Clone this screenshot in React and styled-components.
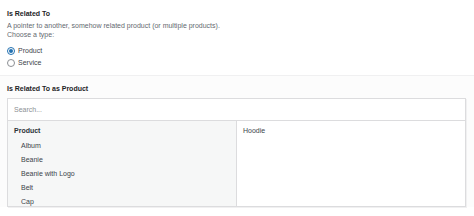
import React from "react";
import styled, { createGlobalStyle } from "styled-components";

const GlobalStyle = createGlobalStyle`
  html, body {
    margin: 0;
    padding: 0;
    background: #ffffff;
  }
  body {
    font-family: "Liberation Sans", Arial, sans-serif;
    color: #3c434a;
  }
`;

const Page = styled.div`
  width: 474px;
  height: 216px;
  overflow: hidden;
  display: flex;
  flex-direction: column;
`;

const Section = styled.div`
  display: flex;
  flex-direction: column;
  padding: ${(p) => p.$pad};
  background: ${(p) => p.$bg || "#ffffff"};
  border-top: ${(p) => (p.$divided ? "1px solid #f0f0f1" : "none")};
  box-sizing: border-box;
  height: ${(p) => p.$height || "auto"};
`;

const Title = styled.div`
  font-size: 7px;
  line-height: 8px;
  font-weight: 700;
  color: #1d2327;
  margin-bottom: ${(p) => p.$mb || "3px"};
`;

const Description = styled.p`
  margin: 0;
  font-size: 7px;
  line-height: 9px;
  color: #646970;
`;

const RadioList = styled.div`
  display: flex;
  flex-direction: column;
  gap: 3.5px;
  margin-top: 8px;
`;

const RadioRow = styled.label`
  display: flex;
  align-items: center;
  gap: 3px;
  font-size: 7px;
  line-height: 8.5px;
  color: #3c434a;
`;

const RadioDot = styled.span`
  width: 8px;
  height: 8px;
  border-radius: 50%;
  box-sizing: border-box;
  border: 1px solid ${(p) => (p.$checked ? "#2271b1" : "#8c8f94")};
  background: #ffffff;
  display: flex;
  align-items: center;
  justify-content: center;

  &::after {
    content: "";
    width: 4px;
    height: 4px;
    border-radius: 50%;
    background: ${(p) => (p.$checked ? "#2271b1" : "transparent")};
  }
`;

const Picker = styled.div`
  border: 1px solid #dcdcde;
  box-shadow: 1px 1px 0 #f0f0f1;
  background: #ffffff;
  display: flex;
  flex-direction: column;
  height: 109px;
  box-sizing: border-box;
`;

const SearchBox = styled.div`
  height: 22px;
  flex: none;
  display: flex;
  align-items: center;
  padding: 0 6px;
  border-bottom: 1px solid #dcdcde;
  font-size: 7px;
  color: #8c8f94;
  box-sizing: border-box;
`;

const Columns = styled.div`
  flex: 1;
  display: grid;
  grid-template-columns: 229px 1fr;
  min-height: 0;
`;

const Options = styled.div`
  background: #f6f7f7;
  border-right: 1px solid #dcdcde;
  overflow: hidden;
  padding-top: 6px;
`;

const GroupLabel = styled.div`
  font-size: 7px;
  font-weight: 700;
  color: #2c3338;
  line-height: 8px;
  padding-left: 6px;
  margin-bottom: 4px;
`;

const Option = styled.div`
  font-size: 7px;
  color: #3c434a;
  line-height: 14px;
  padding-left: 13px;
`;

const Selected = styled.div`
  padding: 6px 6px;
`;

const SelectedItem = styled.div`
  font-size: 7px;
  line-height: 8px;
  color: #3c434a;
`;

const products = ["Album", "Beanie", "Beanie with Logo", "Belt", "Cap", "Hoodie"];

export default function App() {
  return (
    <Page>
      <GlobalStyle />
      <Section $pad="10px 7px 0" $height="75px">
        <Title>Is Related To</Title>
        <Description>
          A pointer to another, somehow related product (or multiple products).
        </Description>
        <Description>Choose a type:</Description>
        <RadioList>
          <RadioRow>
            <RadioDot $checked /> Product
          </RadioRow>
          <RadioRow>
            <RadioDot /> Service
          </RadioRow>
        </RadioList>
      </Section>
      <Section $pad="9px 8px 0 7px" $bg="#fcfcfc" $divided>
        <Title $mb="5px">Is Related To as Product</Title>
        <Picker>
          <SearchBox>Search...</SearchBox>
          <Columns>
            <Options>
              <GroupLabel>Product</GroupLabel>
              {products.slice(0, 5).map((p) => (
                <Option key={p}>{p}</Option>
              ))}
            </Options>
            <Selected>
              <SelectedItem>Hoodie</SelectedItem>
            </Selected>
          </Columns>
        </Picker>
      </Section>
    </Page>
  );
}
